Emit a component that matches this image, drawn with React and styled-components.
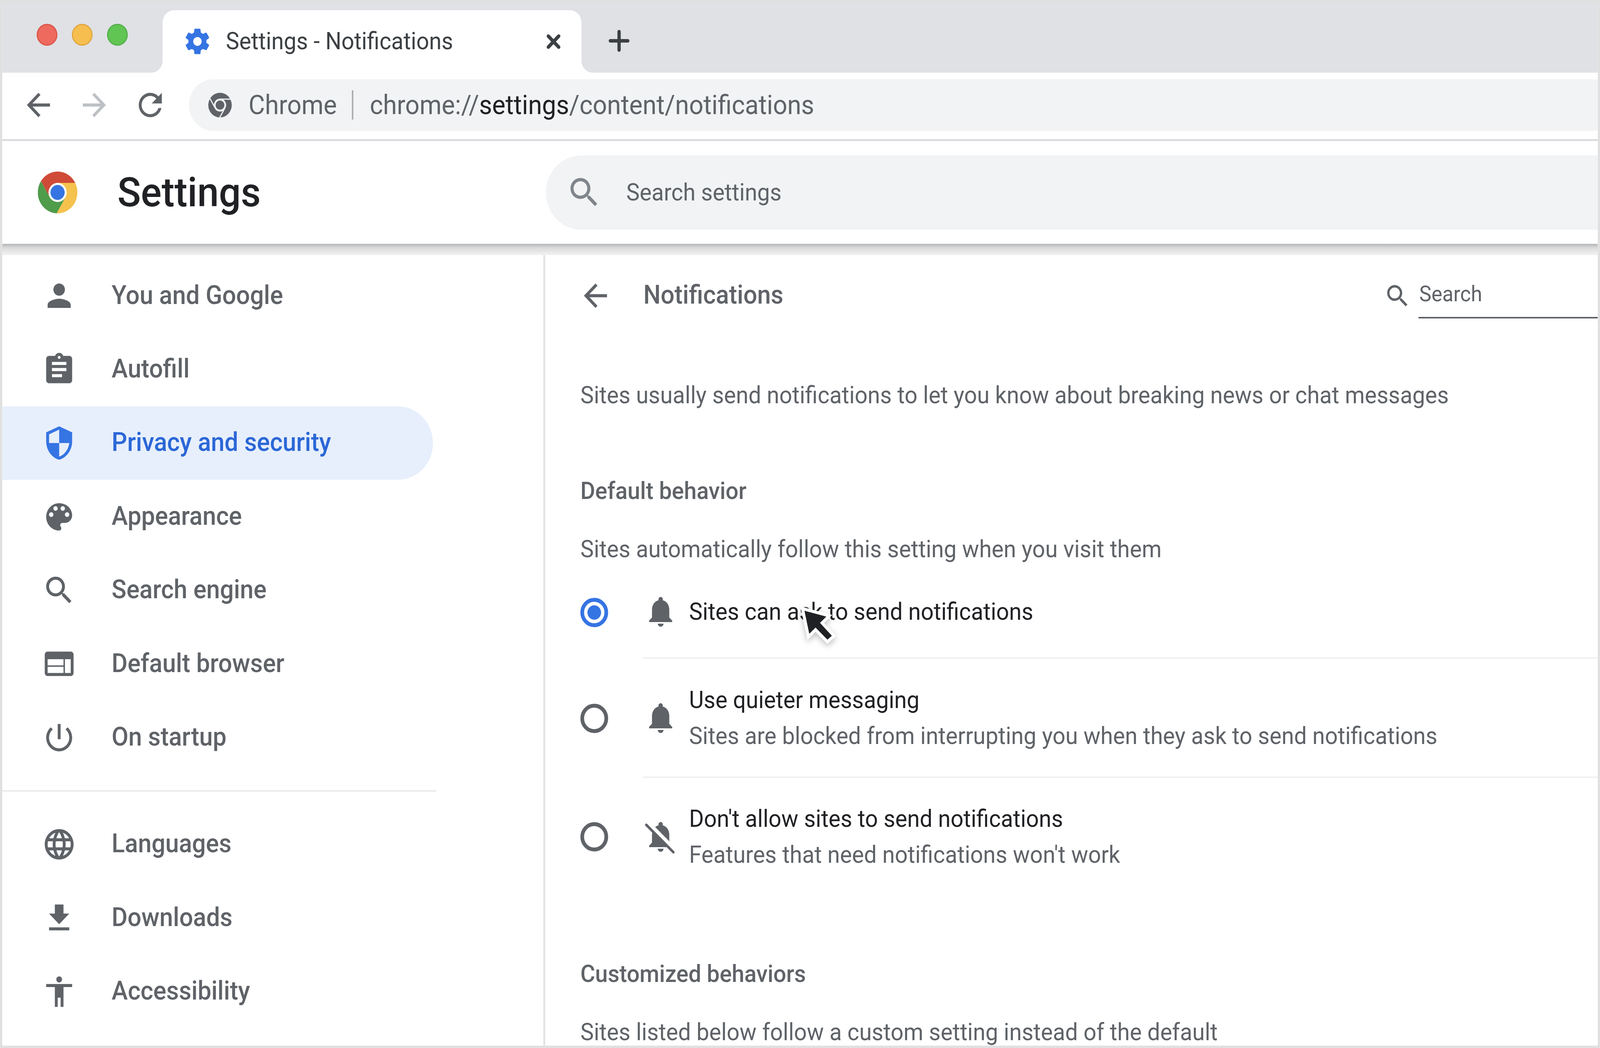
import React from "react";
import styled, { createGlobalStyle } from "styled-components";

const GlobalStyle = createGlobalStyle`
  html, body { margin: 0; padding: 0; background: #e0e0e0; overflow: hidden; }
  * { box-sizing: border-box; }
`;

const GRAY = "#5f6368";
const DARK = "#202124";
const BLUE = "#3574e3";
const FONT = `Roboto, "Liberation Sans", sans-serif`;
const DESIGN_WIDTH = 4320;

const Page = styled.div`
  width: ${DESIGN_WIDTH}px;
  height: 2682px;
  padding: 5px 6px 6px;
  background: #e0e0e0;
  font-family: ${FONT};
  overflow: hidden;
  transform-origin: 0 0;
`;
const Browser = styled.div`
  width: 100%;
  height: 100%;
  display: flex;
  flex-direction: column;
  background: #fff;
  overflow: hidden;
`;

/* ---------- tab strip ---------- */
const TabStrip = styled.div`
  height: 181px;
  flex: none;
  display: flex;
  align-items: flex-start;
  background: #dfe1e5;
`;
const Lights = styled.div`
  display: flex;
  gap: 39px;
  margin: 56px 0 0 93px;
`;
const Light = styled.span`
  width: 56px;
  height: 56px;
  border-radius: 50%;
  background: ${(p) => p.$fill};
  border: 3px solid ${(p) => p.$edge};
`;
const Tab = styled.div`
  position: relative;
  width: 1131px;
  height: 160px;
  margin: 21px 0 0 94px;
  padding: 0 41px 0 55px;
  display: flex;
  align-items: center;
  background: #fff;
  border-radius: 32px 32px 0 0;
  &::before, &::after {
    content: "";
    position: absolute;
    bottom: 0;
    width: 30px;
    height: 30px;
  }
  &::before {
    right: 100%;
    background: radial-gradient(circle at 0 0, transparent 29.5px, #fff 30px);
  }
  &::after {
    left: 100%;
    background: radial-gradient(circle at 100% 0, transparent 29.5px, #fff 30px);
  }
`;
const TabTitle = styled.span`
  margin-left: 38px;
  font-size: 60.7px;
  line-height: 80px;
  color: #3c4043;
  white-space: nowrap;
`;
const TabClose = styled.span`
  margin-left: auto;
  display: flex;
`;
const NewTab = styled.span`
  display: flex;
  margin: 48px 0 0 50px;
`;

/* ---------- toolbar ---------- */
const Toolbar = styled.div`
  height: 175px;
  flex: none;
  padding: 0 0 5px 51px;
  display: flex;
  align-items: center;
  gap: 57.5px;
  background: #fff;
  border-bottom: 5px solid #dadce0;
`;
const Omnibox = styled.div`
  flex: 1;
  height: 132px;
  padding-left: 51px;
  display: flex;
  align-items: center;
  background: #f1f3f4;
  border-radius: 66px 0 0 66px;
`;
const Origin = styled.span`
  margin-left: 44px;
  font-size: 68px;
  color: ${GRAY};
`;
const OriginRule = styled.span`
  width: 4px;
  height: 75px;
  margin: 0 45px 0 40px;
  background: #a9abae;
`;
const Url = styled.span`
  font-size: 68px;
  color: ${GRAY};
  white-space: nowrap;
`;
const UrlStrong = styled.span`
  color: ${DARK};
`;

/* ---------- settings header ---------- */
const Header = styled.header`
  position: relative;
  z-index: 2;
  height: 263px;
  flex: none;
  display: flex;
  align-items: center;
  background: #fff;
  &::after {
    content: "";
    position: absolute;
    top: 100%;
    left: 0;
    right: 0;
    height: 29px;
    background: linear-gradient(#b4b5b7, #d9dadb 35%, #f3f3f3);
  }
`;
const Brand = styled.div`
  width: 1468px;
  flex: none;
  padding-left: 96px;
  display: flex;
  align-items: center;
  gap: 108px;
`;
const PageTitle = styled.h1`
  margin: 0;
  font-size: 104.6px;
  font-weight: 500;
  line-height: 130px;
  color: ${DARK};
`;
const SearchField = styled.div`
  flex: 1;
  height: 190px;
  padding-left: 54px;
  display: flex;
  align-items: center;
  gap: 64px;
  background: #f1f3f4;
  border-radius: 95px 0 0 95px;
`;
const SearchHint = styled.span`
  font-size: 60.8px;
  color: ${GRAY};
`;

/* ---------- body ---------- */
const Body = styled.div`
  flex: 1;
  min-height: 0;
  display: flex;
  overflow: hidden;
`;
const Sidebar = styled.nav`
  width: 1466px;
  flex: none;
  padding-top: 39px;
  border-right: 5px solid #e3e3e3;
`;
const NavRow = styled.div`
  height: 188.4px;
  width: ${(p) => (p.$active ? "1163px" : "auto")};
  padding-left: 107px;
  display: flex;
  align-items: center;
  gap: 95px;
  font-size: 65.8px;
  font-weight: 500;
  color: ${(p) => (p.$active ? "#2b67d6" : GRAY)};
  background: ${(p) => (p.$active ? "#e7effc" : "transparent")};
  border-radius: ${(p) => (p.$active ? "0 94px 94px 0" : "0")};
  svg { color: ${(p) => (p.$active ? BLUE : GRAY)}; }
`;
const NavLabel = styled.span`
  position: relative;
  top: -2px;
`;
const NavRule = styled.div`
  width: 1172px;
  height: 4px;
  margin: 40px 0 41px;
  background: #ebebeb;
`;
const Main = styled.main`
  flex: 1;
  min-width: 0;
  padding: 39px 0 0 95px;
`;
const SubHeader = styled.div`
  height: 188px;
  display: flex;
  align-items: center;
`;
const BackButton = styled.span`
  display: flex;
  margin-left: -6px;
`;
const SubTitle = styled.h2`
  margin: 0 0 4px 82.5px;
  font-size: 65.9px;
  font-weight: 500;
  line-height: 80px;
  color: ${GRAY};
`;
const FindBox = styled.div`
  margin-left: auto;
  display: flex;
  align-items: center;
  gap: 19px;
`;
const FindInput = styled.div`
  width: 484px;
  height: 116px;
  padding: 0 0 6px 2px;
  display: flex;
  align-items: center;
  font-size: 55.3px;
  color: ${GRAY};
  border-bottom: 4px solid ${GRAY};
`;
const Para = styled.p`
  margin: ${(p) => p.$top}px 0 0;
  font-size: 61.1px;
  line-height: 80px;
  color: ${GRAY};
  white-space: nowrap;
`;
const SectionHead = styled.h3`
  margin: ${(p) => p.$top}px 0 0;
  font-size: 61.2px;
  font-weight: 500;
  line-height: 80px;
  color: ${GRAY};
`;
const Options = styled.div`
  margin-top: 3px;
`;
const Option = styled.div`
  position: relative;
  height: ${(p) => p.$h}px;
  display: flex;
  align-items: center;
`;
const Radio = styled.span`
  width: 75px;
  height: 75px;
  flex: none;
  display: flex;
  align-items: center;
  justify-content: center;
  border-radius: 50%;
  border: 10px solid ${(p) => (p.$on ? BLUE : GRAY)};
  &::after {
    content: "";
    display: ${(p) => (p.$on ? "block" : "none")};
    width: 37px;
    height: 37px;
    border-radius: 50%;
    background: ${BLUE};
  }
`;
const OptionBody = styled.div`
  flex: 1;
  height: 100%;
  margin-left: 95px;
  display: flex;
  align-items: center;
  gap: 30px;
  color: ${GRAY};
  border-bottom: ${(p) => (p.$last ? "none" : "4px solid #f0f0f0")};
`;
const OptionText = styled.div`
  display: flex;
  flex-direction: column;
`;
const OptionTitle = styled.span`
  font-size: 61.1px;
  line-height: 92px;
  color: ${DARK};
  white-space: nowrap;
`;
const OptionSub = styled.span`
  font-size: 61.1px;
  line-height: 92px;
  color: ${GRAY};
  white-space: nowrap;
`;
const Pointer = styled.svg`
  position: absolute;
  left: 593px;
  top: 102px;
  overflow: visible;
  filter: drop-shadow(0 6px 8px rgba(0, 0, 0, 0.25));
`;

/* ---------- icons ---------- */
const Glyph = ({ d, size = 93.5, color = "currentColor" }) => (
  <svg width={size} height={size} viewBox="0 0 24 24" fill={color} style={{ flex: "none" }}>
    <path d={d} />
  </svg>
);

const CloseMark = () => (
  <svg width={69} height={69} viewBox="0 0 69 69" style={{ flex: "none" }}>
    <path d="M20.5 20.5L48.5 48.5M48.5 20.5L20.5 48.5" stroke="#3c4043" strokeWidth="9" strokeLinecap="round" fill="none" />
  </svg>
);

const PlusMark = () => (
  <svg width={103} height={103} viewBox="0 0 103 103" style={{ flex: "none" }}>
    <path d="M51.5 28V75M28 51.5H75" stroke="#3c4043" strokeWidth="9" strokeLinecap="round" fill="none" />
  </svg>
);

const I = {
  person: "M12 12c2.21 0 4-1.79 4-4s-1.79-4-4-4-4 1.79-4 4 1.79 4 4 4zm0 2c-2.67 0-8 1.34-8 4v2h16v-2c0-2.66-5.33-4-8-4z",
  assignment: "M19 3h-4.18C14.4 1.84 13.3 1 12 1c-1.3 0-2.4.84-2.82 2H5c-1.1 0-2 .9-2 2v14c0 1.1.9 2 2 2h14c1.1 0 2-.9 2-2V5c0-1.1-.9-2-2-2zm-7 0c.55 0 1 .45 1 1s-.45 1-1 1-1-.45-1-1 .45-1 1-1zm2 14H7v-2h7v2zm3-4H7v-2h10v2zm0-4H7V7h10v2z",
  shield: "M12 1L3 5v6c0 5.55 3.84 10.74 9 12 5.16-1.26 9-6.45 9-12V5l-9-4zm0 10.99h7c-.53 4.12-3.28 7.79-7 8.94V12H5V6.3l7-3.11v8.8z",
  palette: "M12 3c-4.97 0-9 4.03-9 9s4.03 9 9 9c.83 0 1.5-.67 1.5-1.5 0-.39-.15-.74-.39-1.01-.23-.26-.38-.61-.38-.99 0-.83.67-1.5 1.5-1.5H16c2.76 0 5-2.24 5-5 0-4.42-4.03-8-9-8zm-5.5 9c-.83 0-1.5-.67-1.5-1.5S5.67 9 6.5 9 8 9.67 8 10.5 7.33 12 6.5 12zm3-4C8.67 8 8 7.33 8 6.5S8.67 5 9.5 5s1.5.67 1.5 1.5S10.33 8 9.5 8zm5 0c-.83 0-1.5-.67-1.5-1.5S13.67 5 14.5 5s1.5.67 1.5 1.5S15.33 8 14.5 8zm3 4c-.83 0-1.5-.67-1.5-1.5S16.67 9 17.5 9s1.5.67 1.5 1.5-.67 1.5-1.5 1.5z",
  search: "M15.5 14h-.79l-.28-.27C15.41 12.59 16 11.11 16 9.5 16 5.91 13.09 3 9.5 3S3 5.91 3 9.5 5.91 16 9.5 16c1.61 0 3.09-.59 4.23-1.57l.27.28v.79l5 4.99L20.49 19l-4.99-5zm-6 0C7.01 14 5 11.99 5 9.5S7.01 5 9.5 5 14 7.01 14 9.5 11.99 14 9.5 14z",
  web: "M20 4H4c-1.1 0-1.99.9-1.99 2L2 18c0 1.1.9 2 2 2h16c1.1 0 2-.9 2-2V6c0-1.1-.9-2-2-2zm-5 14H4v-4h11v4zm0-5H4V9h11v4zm5 5h-4V9h4v9z",
  power: "M13 3h-2v10h2V3zm4.83 2.17l-1.42 1.42C17.99 7.86 19 9.81 19 12c0 3.87-3.13 7-7 7s-7-3.13-7-7c0-2.19 1.01-4.14 2.58-5.42L6.17 5.17C4.23 6.82 3 9.26 3 12c0 4.97 4.03 9 9 9s9-4.03 9-9c0-2.74-1.23-5.18-3.17-6.83z",
  language: "M11.99 2C6.47 2 2 6.48 2 12s4.47 10 9.99 10C17.52 22 22 17.52 22 12S17.52 2 11.99 2zm6.93 6h-2.95c-.32-1.25-.78-2.45-1.38-3.56 1.84.63 3.37 1.91 4.33 3.56zM12 4.04c.83 1.2 1.48 2.53 1.91 3.96h-3.82c.43-1.43 1.08-2.76 1.91-3.96zM4.26 14C4.1 13.36 4 12.69 4 12s.1-1.36.26-2h3.38c-.08.66-.14 1.32-.14 2 0 .68.06 1.34.14 2H4.26zm.82 2h2.95c.32 1.25.78 2.45 1.38 3.56-1.84-.63-3.37-1.9-4.33-3.56zm2.95-8H5.08c.96-1.66 2.49-2.93 4.33-3.56C8.81 5.55 8.35 6.75 8.03 8zM12 19.96c-.83-1.2-1.48-2.53-1.91-3.96h3.82c-.43 1.43-1.08 2.76-1.91 3.96zM14.34 14H9.66c-.09-.66-.16-1.32-.16-2 0-.68.07-1.35.16-2h4.68c.09.65.16 1.32.16 2 0 .68-.07 1.34-.16 2zm.25 5.56c.6-1.11 1.06-2.31 1.38-3.56h2.95c-.96 1.65-2.49 2.93-4.33 3.56zM16.36 14c.08-.66.14-1.32.14-2 0-.68-.06-1.34-.14-2h3.38c.16.64.26 1.31.26 2s-.1 1.36-.26 2h-3.38z",
  download: "M19 9h-4V3H9v6H5l7 7 7-7zM5 18v2h14v-2H5z",
  accessibility: "M12 2c1.1 0 2 .9 2 2s-.9 2-2 2-2-.9-2-2 .9-2 2-2zm9 7h-6v13h-2v-6h-2v6H9V9H3V7h18v2z",
  back: "M20 11H7.83l5.59-5.59L12 4l-8 8 8 8 1.41-1.41L7.83 13H20v-2z",
  forward: "M12 4l-1.41 1.41L16.17 11H4v2h12.17l-5.58 5.59L12 20l8-8z",
  refresh: "M17.65 6.35C16.2 4.9 14.21 4 12 4c-4.42 0-7.99 3.58-7.99 8s3.57 8 7.99 8c3.73 0 6.84-2.55 7.73-6h-2.08c-.82 2.33-3.04 4-5.65 4-3.31 0-6-2.69-6-6s2.69-6 6-6c1.66 0 3.14.69 4.22 1.78L13 11h7V4l-2.35 2.35z",
  gear: "M19.43 12.98c.04-.32.07-.64.07-.98s-.03-.66-.07-.98l2.11-1.65c.19-.15.24-.42.12-.64l-2-3.46c-.12-.22-.39-.3-.61-.22l-2.49 1c-.52-.4-1.08-.73-1.69-.98l-.38-2.65C14.46 2.18 14.25 2 14 2h-4c-.25 0-.46.18-.49.42l-.38 2.65c-.61.25-1.17.59-1.69.98l-2.49-1c-.23-.09-.49 0-.61.22l-2 3.46c-.13.22-.07.49.12.64l2.11 1.65c-.04.32-.07.65-.07.98s.03.66.07.98l-2.11 1.65c-.19.15-.24.42-.12.64l2 3.46c.12.22.39.3.61.22l2.49-1c.52.4 1.08.73 1.69.98l.38 2.65c.03.24.24.42.49.42h4c.25 0 .46-.18.49-.42l.38-2.65c.61-.25 1.17-.59 1.69-.98l2.49 1c.23.09.49 0 .61-.22l2-3.46c.12-.22.07-.49-.12-.64l-2.11-1.65zM12 15.5c-1.93 0-3.5-1.57-3.5-3.5s1.57-3.5 3.5-3.5 3.5 1.57 3.5 3.5-1.57 3.5-3.5 3.5z",
  bell: "M12 22c1.1 0 2-.9 2-2h-4c0 1.1.89 2 2 2zm6-6v-5c0-3.07-1.64-5.64-4.5-6.32V4c0-.83-.67-1.5-1.5-1.5s-1.5.67-1.5 1.5v.68C7.63 5.36 6 7.92 6 11v5l-2 2v1h16v-1l-2-2z",
};

const BellOff = () => (
  <svg width={93.5} height={93.5} viewBox="0 0 24 24" style={{ flex: "none" }}>
    <path fill={GRAY} d={I.bell} />
    <path stroke="#fff" strokeWidth="2.4" d="M3.45 2.9L22.2 20.85" />
    <path stroke={GRAY} strokeWidth="1.7" strokeLinecap="round" d="M2.05 4.36L20.8 22.3" />
  </svg>
);

const ChromeMark = ({ size, red, yellow, green, core, gap = "none" }) => (
  <svg width={size} height={size} viewBox="0 0 48 48" style={{ flex: "none" }}>
    <path fill={red} stroke={gap} strokeWidth="2" d="M24 13L45.33 13A24 24 0 0 0 3.81 11.03L14.47 29.5A11 11 0 0 1 24 13Z" />
    <path fill={yellow} stroke={gap} strokeWidth="2" d="M24 13L45.33 13A24 24 0 0 1 22.86 47.97L33.53 29.5A11 11 0 0 0 24 13Z" />
    <path fill={green} stroke={gap} strokeWidth="2" d="M33.53 29.5L22.86 47.97A24 24 0 0 1 3.81 11.03L14.47 29.5A11 11 0 0 0 33.53 29.5Z" />
    <circle cx="24" cy="24" r="8.6" fill={core} />
  </svg>
);

const navTop = [
  ["person", "You and Google"],
  ["assignment", "Autofill"],
  ["shield", "Privacy and security", true],
  ["palette", "Appearance"],
  ["search", "Search engine"],
  ["web", "Default browser"],
  ["power", "On startup"],
];
const navBottom = [
  ["language", "Languages"],
  ["download", "Downloads"],
  ["accessibility", "Accessibility"],
];

const NavItem = ({ icon, label, active }) => (
  <NavRow $active={active}>
    <Glyph d={I[icon]} />
    <NavLabel>{label}</NavLabel>
  </NavRow>
);

export default function App() {
  const fit = window.innerWidth / DESIGN_WIDTH;
  return (
    <Page style={{ transform: `scaleX(${fit})` }}>
      <GlobalStyle />
      <Browser>
        <TabStrip>
          <Lights>
            <Light $fill="#ee6a5f" $edge="#dc5347" />
            <Light $fill="#f6bd4f" $edge="#e0a63e" />
            <Light $fill="#61c554" $edge="#52ae46" />
          </Lights>
          <Tab>
            <Glyph d={I.gear} size={78} color={BLUE} />
            <TabTitle>Settings - Notifications</TabTitle>
            <TabClose>
              <CloseMark />
            </TabClose>
          </Tab>
          <NewTab>
            <PlusMark />
          </NewTab>
        </TabStrip>

        <Toolbar>
          <Glyph d={I.back} color={GRAY} />
          <Glyph d={I.forward} color="#bdc1c6" />
          <Glyph d={I.refresh} color={GRAY} />
          <Omnibox>
            <ChromeMark size={66} red={GRAY} yellow={GRAY} green={GRAY} core={GRAY} gap="#f1f3f4" />
            <Origin>Chrome</Origin>
            <OriginRule />
            <Url>
              chrome://<UrlStrong>settings</UrlStrong>/content/notifications
            </Url>
          </Omnibox>
        </Toolbar>

        <Header>
          <Brand>
            <ChromeMark size={107} red="#d04a38" yellow="#f4c24d" green="#4f9c4b" core={BLUE} />
            <PageTitle>Settings</PageTitle>
          </Brand>
          <SearchField>
            <Glyph d={I.search} size={99} color="#80868b" />
            <SearchHint>Search settings</SearchHint>
          </SearchField>
        </Header>

        <Body>
          <Sidebar>
            {navTop.map(([icon, label, active]) => (
              <NavItem key={label} icon={icon} label={label} active={active} />
            ))}
            <NavRule />
            {navBottom.map(([icon, label]) => (
              <NavItem key={label} icon={icon} label={label} />
            ))}
          </Sidebar>

          <Main>
            <SubHeader>
              <BackButton>
                <Glyph d={I.back} color={GRAY} />
              </BackButton>
              <SubTitle>Notifications</SubTitle>
              <FindBox>
                <Glyph d={I.search} size={75} color={GRAY} />
                <FindInput>Search</FindInput>
              </FindBox>
            </SubHeader>

            <Para $top={120}>
              Sites usually send notifications to let you know about breaking news or chat messages
            </Para>
            <SectionHead $top={165}>Default behavior</SectionHead>
            <Para $top={69}>Sites automatically follow this setting when you visit them</Para>

            <Options>
              <Option $h={238}>
                <Radio $on />
                <OptionBody>
                  <Glyph d={I.bell} />
                  <OptionText>
                    <OptionTitle>Sites can ask to send notifications</OptionTitle>
                  </OptionText>
                </OptionBody>
                <Pointer width="110" height="110" viewBox="0 0 110 110">
                  <path
                    d="M12 13L71 28L54 44L86 77L74 87L42 56L25 72Z"
                    fill="#202124"
                    stroke="#fff"
                    strokeWidth="16"
                    strokeLinejoin="miter"
                    paintOrder="stroke"
                  />
                </Pointer>
              </Option>
              <Option $h={305}>
                <Radio />
                <OptionBody>
                  <Glyph d={I.bell} />
                  <OptionText>
                    <OptionTitle>Use quieter messaging</OptionTitle>
                    <OptionSub>Sites are blocked from interrupting you when they ask to send notifications</OptionSub>
                  </OptionText>
                </OptionBody>
              </Option>
              <Option $h={300}>
                <Radio />
                <OptionBody $last>
                  <BellOff />
                  <OptionText>
                    <OptionTitle>Don't allow sites to send notifications</OptionTitle>
                    <OptionSub>Features that need notifications won't work</OptionSub>
                  </OptionText>
                </OptionBody>
              </Option>
            </Options>

            <SectionHead $top={161}>Customized behaviors</SectionHead>
            <Para $top={69}>Sites listed below follow a custom setting instead of the default</Para>
          </Main>
        </Body>
      </Browser>
    </Page>
  );
}
